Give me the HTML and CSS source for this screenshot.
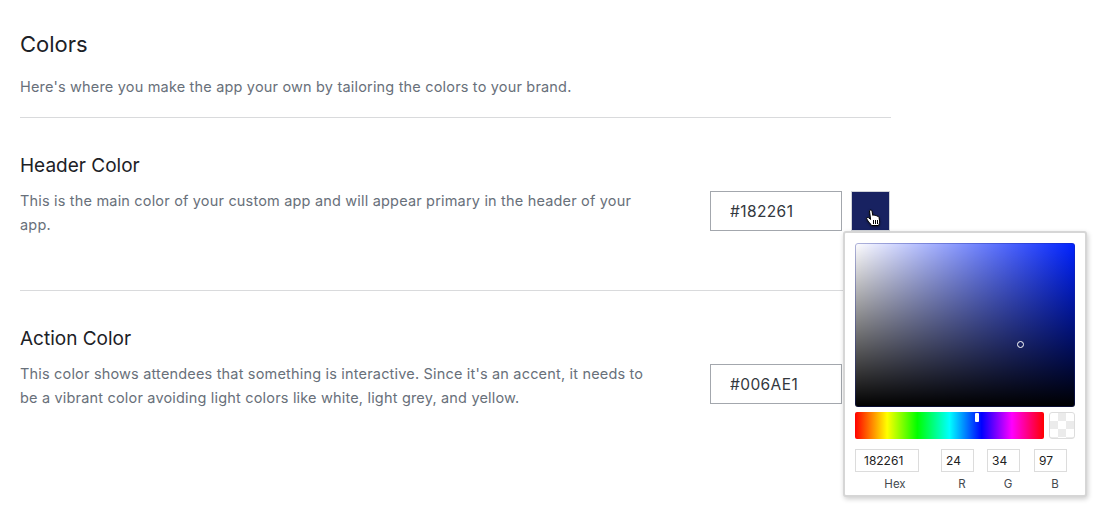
FILE: index.html
```html
<!DOCTYPE html>
<html lang="en">
<head>
    <meta charset="UTF-8">
    <meta name="viewport" content="width=device-width, initial-scale=1.0">
    <title>Colors</title>
    <link rel="stylesheet" href="styles.css">
</head>
<body>
    <div class="page">
        <header class="page-head">
            <h2>Colors</h2>
            <p class="text">Here's where you make the app your own by tailoring the colors to your brand.</p>
        </header>

        <section class="color-row">
            <div class="color-info">
                <h3>Header Color</h3>
                <p class="text">This is the main color of your custom app and will appear primary in the header of your app.</p>
            </div>
            <div class="color-field">
                <input class="hex-input" type="text" value="#182261">
                <div class="swatch swatch-header">
                    <svg class="hand" width="16" height="19" viewBox="0 0 16 19">
                        <path d="M3.500 2c0-1.300 2.300-1.300 2.500 0l.8 4.500c.7-.7 1.800-.6 2.200.2.800-.5 1.800-.2 2 .6.800-.3 1.800.1 2 1l.6 3.700c.2 1.500-.4 2.800-1 4.500H5.500c-.6-1.500-1.800-2.500-2.800-3.500L.8 10c-.6-1.200.8-2.200 1.900-1.200l1.900 1.700z" fill="#ffffff" stroke="#000000" stroke-width="1"/>
                        <path d="M7.500 11v4M9.500 11v4M11.500 11v4" stroke="#000000" stroke-width="1" fill="none"/>
                    </svg>
                </div>
            </div>
        </section>

        <section class="color-row">
            <div class="color-info">
                <h3>Action Color</h3>
                <p class="text">This color shows attendees that something is interactive. Since it's an accent, it needs to be a vibrant color avoiding light colors like white, light grey, and yellow.</p>
            </div>
            <div class="color-field">
                <input class="hex-input" type="text" value="#006AE1">
                <div class="swatch swatch-action"></div>
            </div>
        </section>
    </div>

    <!-- Picker popover, open on the header color -->
    <div class="picker">
        <div class="saturation">
            <span class="sat-handle"></span>
        </div>
        <div class="slider-row">
            <div class="hue"><span class="hue-handle"></span></div>
            <div class="alpha"></div>
        </div>
        <div class="picker-fields">
            <label class="field field-hex"><input type="text" value="182261"><span>Hex</span></label>
            <label class="field field-r"><input type="text" value="24"><span>R</span></label>
            <label class="field field-g"><input type="text" value="34"><span>G</span></label>
            <label class="field field-b"><input type="text" value="97"><span>B</span></label>
        </div>
    </div>
</body>
</html>
```

FILE: styles.css
```css
body {
    font-family: Inter, "Noto Sans", sans-serif;
    background-color: #ffffff;
    margin: 0;
    overflow: hidden;
}

.page {
    width: 871px;
    padding: 29px 0 0 20px;
}

.page-head {
    border-bottom: 1px solid #d9dadc;
    height: 88px;
}

h2 {
    margin: 0;
    font-size: 22px;
    line-height: 30px;
    font-weight: 400;
    color: #1c2126;
}

h3 {
    margin: 0 0 10px;
    font-size: 19px;
    line-height: 26px;
    font-weight: 400;
    color: #1c2126;
}

.text {
    margin: 0;
    font-size: 14.500px;
    letter-spacing: 0.18px;
    line-height: 24px;
    color: #68707a;
}

.page-head .text {
    margin-top: 16px;
}

.color-row {
    display: flex;
    justify-content: space-between;
    height: 172px;
    border-bottom: 1px solid #d9dadc;
}

.color-row:last-child {
    border-bottom: none;
}

.color-info {
    width: 640px;
    padding-top: 35px;
}

.color-field {
    display: flex;
    gap: 9px;
    padding-top: 73px;
    margin-right: 1px;
    align-items: flex-start;
}

.hex-input {
    width: 132px;
    height: 40px;
    box-sizing: border-box;
    border: 1px solid #a3a7ad;
    padding: 0 0 0 19px;
    font-family: inherit;
    font-size: 15.500px;
    letter-spacing: 0.4px;
    color: #33383e;
    outline: none;
}

.swatch {
    position: relative;
    width: 39px;
    height: 40px;
    box-sizing: border-box;
    border: 1px solid #d0d3d8;
}

.swatch-header {
    background-color: #182261;
}

.swatch-action {
    background-color: #006ae1;
}

.hand {
    position: absolute;
    left: 14px;
    top: 17px;
    filter: drop-shadow(0 1px 1px rgba(0, 0, 0, 0.5));
}

/* Color picker */
.picker {
    position: absolute;
    left: 843px;
    top: 231px;
    width: 244px;
    height: 266px;
    box-sizing: border-box;
    padding: 10px;
    background-color: #ffffff;
    border: 2px solid #d6d6d6;
    border-radius: 3px;
    box-shadow: 1px 2px 5px rgba(0, 0, 0, 0.2);
}

.saturation {
    position: relative;
    height: 164px;
    width: 220px;
    border-radius: 3px;
    background:
        linear-gradient(to top, #000000, rgba(0, 0, 0, 0)),
        linear-gradient(to right, #ffffff, rgba(255, 255, 255, 0)),
        #0022ff;
    box-shadow: inset 0 0 0 1px rgba(30, 40, 150, 0.35);
}

.sat-handle {
    position: absolute;
    left: 162px;
    top: 98px;
    width: 7px;
    height: 7px;
    box-sizing: border-box;
    border: 1.5px solid #ffffff;
    border-radius: 50%;
}

.slider-row {
    display: flex;
    gap: 5px;
    margin-top: 5px;
    width: 220px;
}

.hue {
    position: relative;
    flex: 1;
    height: 27px;
    border-radius: 2px;
    background: linear-gradient(to right, #ff0000 0%, #ffff00 17%, #00ff00 33%, #00ffff 50%, #0000ff 67%, #ff00ff 83%, #ff0000 100%);
}

.hue-handle {
    position: absolute;
    left: 120px;
    top: 1px;
    width: 4px;
    height: 9px;
    border-radius: 1px;
    background-color: #ffffff;
}

.alpha {
    width: 26px;
    height: 27px;
    box-sizing: border-box;
    border: 1px solid #dddddd;
    border-radius: 3px;
    background-color: #ffffff;
    background-image: conic-gradient(#ebebeb 25%, #ffffff 0 50%, #ebebeb 0 75%, #ffffff 0);
    background-size: 16px 16px;
}

.picker-fields {
    display: flex;
    margin-top: 10px;
}

.field {
    display: flex;
    flex-direction: column;
    align-items: center;
    font-size: 11.500px;
    color: #44494f;
}

.field input {
    height: 23px;
    box-sizing: border-box;
    width: 100%;
    border: 1px solid #dcdcdc;
    padding: 0 0 0 4px;
    font-family: inherit;
    font-size: 12px;
    color: #222222;
    outline: none;
}

.field span {
    margin-top: 5px;
    line-height: 14px;
}

.field-hex {
    width: 64px;
}

.field-hex span {
    margin-left: 16px;
}

.field-hex input {
    padding-left: 8px;
}

.field-r {
    width: 33px;
    margin-left: 22px;
}

.field-g {
    width: 33px;
    margin-left: 13px;
}

.field-b {
    width: 33px;
    margin-left: 14px;
}

.field-r span,
.field-g span,
.field-b span {
    margin-left: 9px;
}
```
